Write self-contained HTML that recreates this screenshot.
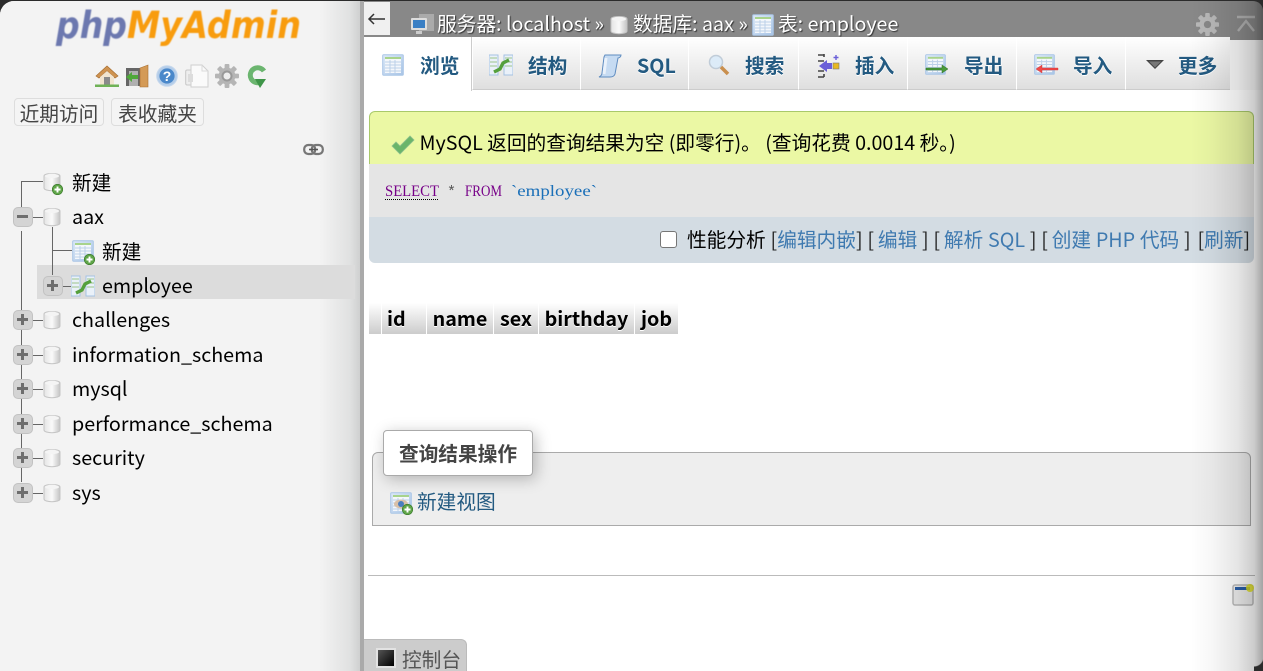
<!DOCTYPE html>
<html lang="zh"><head><meta charset="utf-8"><title>phpMyAdmin</title>
<style>
html,body{margin:0;padding:0;width:1263px;height:671px;overflow:hidden;background:#2b2b2b}
body{font-family:"Noto Sans CJK SC","Liberation Sans",sans-serif;font-size:19.7px;color:#000;position:relative}
.a{position:absolute;white-space:nowrap}
.t{position:absolute;white-space:nowrap;line-height:30px;height:30px}
svg{position:absolute;overflow:visible;filter:blur(.35px)}
#win{position:absolute;left:0;top:1px;width:1263px;height:670px;border-radius:14px 14px 10px 0;overflow:hidden;background:#fff}
.tab{position:absolute;top:37px;height:53px;width:109px;box-sizing:border-box;background:linear-gradient(#fff,#dfdfdf);border-left:1px solid #fff;border-bottom:1px solid #ccc}
.tl{position:absolute;top:50px;line-height:30px;font-weight:bold;color:#235a81;text-shadow:0 1px 0 #fff,1px 0 0 rgba(255,255,255,.6)}
.th{position:absolute;top:303px;height:31px;background:linear-gradient(#fff,#ccc);font-weight:bold;line-height:29px;text-align:center;text-shadow:0 1px 0 #fff}
.btn{position:absolute;top:98px;height:28px;width:90px;box-sizing:border-box;border:1px solid #ddd;border-radius:4px;background:#f4f4f4;color:#444;line-height:28px;text-align:center}
.lk{color:#3f7ab0}
.br{color:#222}
.x{position:absolute;width:20px;height:20px;box-sizing:border-box;border:1.5px solid #c2c2c2;border-radius:5px;background:#d4d4d4}
.x:before{content:"";position:absolute;left:3px;top:7px;width:11px;height:3px;background:#6e6e6e}
.x.p:after{content:"";position:absolute;left:7px;top:3px;width:3px;height:11px;background:#6e6e6e}
</style></head><body>
<svg width="0" height="0" style="position:absolute"><defs>
<linearGradient id="db" x1="0" x2="1"><stop offset="0" stop-color="#e4e4e4"/><stop offset=".5" stop-color="#fafafa"/><stop offset="1" stop-color="#c4c4c4"/></linearGradient>
<linearGradient id="tb" x1="0" y1="0" x2="1" y2="1"><stop offset="0" stop-color="#dce9f8"/><stop offset="1" stop-color="#a8c4e6"/></linearGradient>
<symbol id="cyl" viewBox="0 0 18 20"><path d="M1 4C1 .8 17 .8 17 4V16C17 19.6 1 19.6 1 16Z" fill="url(#db)" stroke="#c4c4c4"/><ellipse cx="9" cy="4" rx="7" ry="2.2" fill="#f4f4f4"/></symbol>
<symbol id="plus" viewBox="0 0 8 8"><circle cx="4" cy="4" r="3.8" fill="#5fa548" stroke="#3a7a2a" stroke-width=".5"/><path d="M4 1.8V6.2M1.8 4H6.2" stroke="#fff" stroke-width="1.4"/></symbol>
<symbol id="tbl" viewBox="0 0 22 22"><rect x=".7" y=".7" width="20.600" height="20.600" rx="1" fill="url(#tb)" stroke="#a9c5e6"/><rect x="3" y="3" width="16" height="16" fill="#f4f7fb"/><rect x="3" y="3" width="16" height="2" fill="#a8d38c"/><path d="M3 8H19M3 11H19M3 14H19M3 17H19M8 6V19M13 6V19" stroke="#bcd0e8" stroke-width="1" fill="none"/></symbol>
<symbol id="str" viewBox="0 0 24 22"><rect x="0" y="1" width="9" height="20" fill="#eaf1f9" stroke="#a6c2e2"/><rect x="15" y="1" width="9" height="20" fill="#eaf1f9" stroke="#a6c2e2"/><path d="M1 4H8M1 8H8M1 12H8M16 4H23M16 8H23M16 12H23" stroke="#9cc58a"/><path d="M5 18L11 15L14 9L20 6" fill="none" stroke="#55a03c" stroke-width="3.400"/></symbol>
</defs></svg>

<div id="win"></div>

<!-- sidebar -->
<div class="a" style="left:0;top:1px;width:360px;height:670px;background:linear-gradient(to right,#f3f3f3 0,#f3f3f3 320px,#e0e1e1 350px,#cfd0d0 360px);border-radius:14px 0 0 0"></div>
<div class="a" style="left:360px;top:0;width:4px;height:671px;background:#aaa"></div>
<div class="a" style="left:0;top:0;width:1263px;height:1px;background:#2b2b2b"></div>

<svg style="left:0;top:0;filter:blur(.5px)" width="360" height="60">
<text x="56" y="38" font-family="DejaVu Sans" font-weight="bold" font-style="italic" font-size="37" fill="#6c78af" textLength="71" lengthAdjust="spacingAndGlyphs">php</text>
<text x="127" y="38" font-family="DejaVu Sans" font-weight="bold" font-style="italic" font-size="37" fill="#f89c0e" textLength="174" lengthAdjust="spacingAndGlyphs">MyAdmin</text>
</svg>

<!-- nav icons -->
<svg style="left:95px;top:64px" width="24" height="24" viewBox="0 0 24 24"><path d="M1 12L12 2L23 12L20 14L12 7L4 14Z" fill="#cf9350" stroke="#a86f32" stroke-width=".7"/><path d="M5 13L12 7L19 13V21H5Z" fill="#f1e4cf"/><rect x="9" y="13" width="6" height="8" fill="#8a8a8a"/><path d="M0 20.500H24V23H0Z" fill="#6fb257"/></svg>
<svg style="left:125px;top:64px" width="24" height="24" viewBox="0 0 24 24"><rect x="1" y="4" width="14" height="18" fill="#666"/><rect x="4" y="7" width="9" height="15" fill="#b0b0b0"/><path d="M15 4L23 1V23H15Z" fill="#d49a56" stroke="#a86f32" stroke-width=".6"/><path d="M1 13L7 8V11H13V15H7V18Z" fill="#4fa83a"/></svg>
<svg style="left:156px;top:65px" width="22" height="22" viewBox="0 0 22 22"><circle cx="11" cy="11" r="10.300" fill="#b4cde9" stroke="#c5d7ec"/><circle cx="11" cy="11" r="7.600" fill="#4a88ca"/><text x="11" y="16" text-anchor="middle" font-family="Liberation Sans" font-weight="bold" font-size="14" fill="#fff">?</text></svg>
<svg style="left:185px;top:64px" width="24" height="24" viewBox="0 0 24 24"><rect x=".7" y="6" width="10" height="15" rx="1.500" fill="#eee" stroke="#c8c8c8"/><path d="M6 1H17L23 7V23H6Z" fill="#fafafa" stroke="#cfcfcf"/><rect x="3" y="10" width="5" height="8" fill="#dcdcdc"/><path d="M17 1V7H23" fill="none" stroke="#dadada"/></svg>
<svg style="left:215px;top:64px" width="24" height="24" viewBox="0 0 24 24"><g fill="#b5b5b5"><circle cx="12" cy="12" r="8.400"/><rect x="9.600" y="0" width="4.800" height="24" rx="1"/><rect x="9.600" y="0" width="4.800" height="24" rx="1" transform="rotate(45 12 12)"/><rect x="9.600" y="0" width="4.800" height="24" rx="1" transform="rotate(90 12 12)"/><rect x="9.600" y="0" width="4.800" height="24" rx="1" transform="rotate(135 12 12)"/></g><circle cx="12" cy="12" r="5.500" fill="#999"/><circle cx="12" cy="12" r="3.500" fill="#eee"/></svg>
<svg style="left:247px;top:65px" width="20" height="24" viewBox="0 0 20 24"><path d="M17 6A7.500 7.500 0 1 0 14 17" fill="none" stroke="#6bb56f" stroke-width="5"/><path d="M8 14H19L13 23Z" fill="#3f9548"/></svg>

<div class="btn" style="left:14px">近期访问</div>
<div class="btn" style="left:111px;width:93px">表收藏夹</div>

<svg style="left:303px;top:143px" width="21" height="13" viewBox="0 0 21 13"><rect x="1.200" y="2" width="11" height="9" rx="4" fill="none" stroke="#777" stroke-width="2.200"/><rect x="8.800" y="2" width="11" height="9" rx="4" fill="none" stroke="#777" stroke-width="2.200"/><path d="M6 6.500H15" stroke="#555" stroke-width="1.600"/></svg>

<!-- tree -->
<div class="a" style="left:37px;top:265px;width:318px;height:34px;background:#dcdcdc"></div>
<svg style="left:0;top:0;filter:none" width="360" height="520" viewBox="0 0 360 520" fill="none" stroke="#666" stroke-width="1">
<path d="M21.500 181.500H43M21.500 181V207M21.500 231V482"/>
<path d="M33 217.500H43M33 320.500H43M33 355.500H43M33 389.500H43M33 424.500H43M33 458.500H43M33 493.500H43"/>
<path d="M52.500 227V275M52.500 250.500H72M63 286.500H72"/>
</svg>
<div class="x" style="left:13px;top:207px"></div>
<div class="x p" style="left:13px;top:310px"></div>
<div class="x p" style="left:13px;top:345px"></div>
<div class="x p" style="left:13px;top:379px"></div>
<div class="x p" style="left:13px;top:414px"></div>
<div class="x p" style="left:13px;top:448px"></div>
<div class="x p" style="left:13px;top:483px"></div>
<div class="x p" style="left:43px;top:276px"></div>
<svg style="left:43px;top:172px" width="18" height="20"><use href="#cyl"/></svg>
<svg style="left:52px;top:184px" width="11" height="11"><use href="#plus"/></svg>
<svg style="left:43px;top:207px" width="18" height="20"><use href="#cyl"/></svg>
<svg style="left:43px;top:310px" width="18" height="20"><use href="#cyl"/></svg>
<svg style="left:43px;top:345px" width="18" height="20"><use href="#cyl"/></svg>
<svg style="left:43px;top:379px" width="18" height="20"><use href="#cyl"/></svg>
<svg style="left:43px;top:414px" width="18" height="20"><use href="#cyl"/></svg>
<svg style="left:43px;top:448px" width="18" height="20"><use href="#cyl"/></svg>
<svg style="left:43px;top:483px" width="18" height="20"><use href="#cyl"/></svg>
<svg style="left:72px;top:240px" width="22" height="22"><use href="#tbl"/></svg>
<svg style="left:84px;top:254px" width="11" height="11"><use href="#plus"/></svg>
<svg style="left:71px;top:275px" width="24" height="22"><use href="#str"/></svg>
<div class="t" style="left:72px;top:167px">新建</div>
<div class="t" style="left:72px;top:201px">aax</div>
<div class="t" style="left:102px;top:236px">新建</div>
<div class="t" style="left:102px;top:270px">employee</div>
<div class="t" style="left:72px;top:304px">challenges</div>
<div class="t" style="left:72px;top:339px">information_schema</div>
<div class="t" style="left:72px;top:373px">mysql</div>
<div class="t" style="left:72px;top:408px">performance_schema</div>
<div class="t" style="left:72px;top:442px">security</div>
<div class="t" style="left:72px;top:477px">sys</div>

<!-- top bar -->
<div class="a" style="left:364px;top:1px;width:899px;height:39px;background:#888;border-radius:0 10px 0 0"></div>
<div class="a" style="left:364px;top:2px;width:26px;height:33px;background:#f0f0f0"></div>
<svg style="left:367px;top:12px;filter:none" width="20" height="14" viewBox="0 0 20 14"><path d="M18 7H2M7 2L2 7L7 12" fill="none" stroke="#333" stroke-width="1.500"/></svg>
<svg style="left:411px;top:13px" width="23" height="23" viewBox="0 0 23 23"><rect x="8" y="1" width="15" height="17" fill="#aaa"/><rect x="0" y="5" width="16" height="12" rx="1" fill="#ddd"/><rect x="2" y="7" width="12" height="8" fill="#3a7fc4"/><rect x="5" y="18" width="6" height="3" fill="#ccc"/></svg>
<svg style="left:610px;top:15px" width="18" height="20"><use href="#cyl"/></svg>
<svg style="left:752px;top:14px" width="22" height="22"><use href="#tbl"/></svg>
<div class="t" style="left:437px;top:8px;color:#fff;text-shadow:1px 1px 1px #333">服务器: localhost »</div>
<div class="t" style="left:633px;top:8px;color:#fff;text-shadow:1px 1px 1px #333">数据库: aax »</div>
<div class="t" style="left:778px;top:8px;color:#fff;text-shadow:1px 1px 1px #333">表: employee</div>

<!-- tabs -->
<div class="a" style="left:364px;top:37px;width:811px;height:2px;background:#fff"></div>
<div class="a" style="left:364px;top:37px;width:107px;height:54px;background:#fff"></div>
<div class="a" style="left:471px;top:37px;height:54px;width:1px;background:#ccc"></div>
<div class="tab" style="left:472px;width:108px"></div>
<div class="tab" style="left:580px;width:108px"></div>
<div class="tab" style="left:688px;width:110px"></div>
<div class="tab" style="left:798px"></div>
<div class="tab" style="left:907px"></div>
<div class="tab" style="left:1016px"></div>
<div class="tab" style="left:1125px;width:105px"></div>
<div class="a" style="left:1230px;top:40px;width:33px;height:50px;background:#f8f8f8"></div>

<svg style="left:382px;top:54px" width="22" height="22"><use href="#tbl"/></svg>
<svg style="left:489px;top:54px" width="24" height="22"><use href="#str"/></svg>
<svg style="left:598px;top:53px" width="24" height="25" viewBox="0 0 24 25"><path d="M7 2H23C23 4 21 5 20 5L17 21C16 24 13 24 12 24H1C3 23 4 22 4 20L6 4Z" fill="#c6dbf2" stroke="#5f8cc0"/><path d="M8 5L6 21" stroke="#eaf2fb" stroke-width="3"/></svg>
<svg style="left:708px;top:54px" width="22" height="22" viewBox="0 0 22 22"><circle cx="8" cy="8" r="6.500" fill="#dcebf8" stroke="#c0ccd8" stroke-width="1.500"/><path d="M13 13L20 20" stroke="#c98f4e" stroke-width="3.500"/></svg>
<svg style="left:817px;top:53px" width="23" height="25" viewBox="0 0 23 25"><path d="M1 2H7M1 8H7M1 18H7M1 24H7M7 1V4M7 21V24" stroke="#444" stroke-width="1.600" fill="none"/><path d="M2 13L10 7V10H15V16H10V19Z" fill="#6a5fd8"/><rect x="16" y="10" width="6" height="6" fill="#e8b820" stroke="#777" stroke-width=".6"/><path d="M19 2V7M16.500 4.500H21.500" stroke="#6a5fd8" stroke-width="1.400"/></svg>
<svg style="left:925px;top:54px" width="24" height="22" viewBox="0 0 24 22"><use href="#tbl" width="21" height="21"/><path d="M1 14H17V11L23 15L17 19V16H1Z" fill="#4a9a3a" stroke="#2f6f25" stroke-width=".5"/></svg>
<svg style="left:1034px;top:54px" width="24" height="22" viewBox="0 0 24 22"><use href="#tbl" width="21" height="21"/><path d="M24 14H8V11L2 15L8 19V16H24Z" fill="#ee4a4a" stroke="#d03030" stroke-width=".4"/></svg>
<svg style="left:1146px;top:59px" width="18" height="11" viewBox="0 0 18 11"><path d="M0 1H18L9 10Z" fill="#444"/><path d="M3 2.500H15L9 8.500Z" fill="#777"/></svg>

<div class="tl" style="left:420px">浏览</div>
<div class="tl" style="left:528px">结构</div>
<div class="tl" style="left:637px">SQL</div>
<div class="tl" style="left:745px">搜索</div>
<div class="tl" style="left:855px">插入</div>
<div class="tl" style="left:964px">导出</div>
<div class="tl" style="left:1073px">导入</div>
<div class="tl" style="left:1178px">更多</div>

<svg style="left:1196px;top:13px" width="23" height="23" viewBox="0 0 24 24"><g fill="#b8b8b8"><circle cx="12" cy="12" r="8.400"/><rect x="9.600" y="0" width="4.800" height="24" rx="1"/><rect x="9.600" y="0" width="4.800" height="24" rx="1" transform="rotate(45 12 12)"/><rect x="9.600" y="0" width="4.800" height="24" rx="1" transform="rotate(90 12 12)"/><rect x="9.600" y="0" width="4.800" height="24" rx="1" transform="rotate(135 12 12)"/></g><circle cx="12" cy="12" r="3.800" fill="#888"/></svg>
<svg style="left:1237px;top:16px" width="18" height="16" viewBox="0 0 18 16"><path d="M0 1H18M1 15L9 5L17 15" fill="none" stroke="#b0b0b0" stroke-width="2.400"/></svg>

<!-- message -->
<div class="a" style="left:369px;top:111px;width:885px;height:53px;box-sizing:border-box;background:#ebf8a4;border:1px solid #a9c96a;border-bottom:0;border-radius:6px 6px 0 0"></div>
<svg style="left:391px;top:135px" width="24" height="20" viewBox="0 0 24 20"><path d="M1 11L5 7L9 11L19 1L23 5L9 19Z" fill="#6ab56a" stroke="#8cc08c" stroke-width=".8"/></svg>
<div class="t" style="left:419.5px;top:127px">MySQL 返回的查询结果为空 (即零行)。 (查询花费 0.0014 秒。)</div>

<div class="a" style="left:369px;top:164px;width:885px;height:53px;background:#e5e5e5"></div>
<svg style="left:0;top:0;filter:none" width="700" height="210" font-family="Liberation Serif" font-size="16">
<text x="385" y="196" fill="#770088" textLength="54" lengthAdjust="spacingAndGlyphs">SELECT</text>
<path d="M385 199.500H439" stroke="#000" stroke-dasharray="1 1"/>
<text x="447" y="196" fill="#555" font-family="Liberation Mono" font-size="15">*</text>
<text x="465" y="196" fill="#770088" textLength="37" lengthAdjust="spacingAndGlyphs">FROM</text>
<text x="511" y="196" fill="#1a6fb8" textLength="86" lengthAdjust="spacingAndGlyphs">`employee`</text>
</svg>

<div class="a" style="left:369px;top:217px;width:885px;height:46px;background:#d3dce3;border-radius:0 0 6px 6px"></div>
<div class="a" style="left:660px;top:231px;width:17px;height:17px;box-sizing:border-box;border:1.500px solid #767676;border-radius:3px;background:#fff"></div>
<div class="t" style="left:687px;top:224px;word-spacing:.36px">性能分析 <span class="br">[</span><span class="lk">编辑内嵌</span><span class="br">]</span> <span class="br">[</span> <span class="lk" style="margin-left:-1px">编辑</span> <span class="br">]</span> <span class="br">[</span> <span class="lk" style="margin-left:-1px">解析 SQL</span> <span class="br">]</span> <span class="br">[</span> <span class="lk" style="margin-left:-1px">创建 PHP 代码</span> <span class="br">]</span> <span class="br" style="margin-left:2px">[</span><span class="lk">刷新</span><span class="br">]</span></div>

<!-- table header -->
<div class="th" style="left:369px;width:12px"></div>
<div class="th" style="left:382px;width:44px;text-align:left"><span style="position:absolute;left:5px">id</span></div>
<div class="th" style="left:427px;width:66px">name</div>
<div class="th" style="left:494px;width:44px">sex</div>
<div class="th" style="left:539px;width:95px">birthday</div>
<div class="th" style="left:635px;width:43px">job</div>

<!-- fieldset -->
<div class="a" style="left:372px;top:452px;width:879px;height:74px;box-sizing:border-box;background:#eee;border:1px solid #aaa;border-radius:6px 6px 0 0"></div>
<div class="a" style="left:383px;top:430px;width:150px;height:46px;box-sizing:border-box;background:#fff;border:1px solid #aaa;border-radius:4px;box-shadow:3px 3px 15px rgba(0,0,0,.25);font-weight:bold;color:#444;line-height:44px;text-align:center">查询结果操作</div>
<svg style="left:390px;top:492px" width="22" height="22"><use href="#tbl"/><ellipse cx="11" cy="12" rx="7" ry="4.500" fill="#d8c0a8"/><circle cx="11" cy="12" r="3" fill="#4a7ec0"/></svg>
<svg style="left:402px;top:504px" width="11" height="11"><use href="#plus"/></svg>
<div class="t" style="left:417px;top:486px;color:#235a81">新建视图</div>

<div class="a" style="left:368px;top:575px;width:887px;height:1px;background:#bbb"></div>
<svg style="left:1232px;top:583px" width="23" height="23" viewBox="0 0 23 23"><rect x="1" y="2" width="20" height="20" rx="2" fill="#eee" stroke="#bbb" stroke-width="1.500"/><rect x="3" y="4" width="15" height="3" fill="#2a5fa8"/><circle cx="18" cy="5" r="4" fill="#dede20" opacity=".85"/></svg>

<!-- console -->
<div class="a" style="left:364px;top:639px;width:103px;height:32px;box-sizing:border-box;background:#ccc;border:1px solid #bbb;border-bottom:0;border-left:0;border-radius:0 6px 0 0"></div>
<div class="a" style="left:376px;top:648px;width:20px;height:20px;box-sizing:border-box;border:2px solid #e2e2e2;background:linear-gradient(135deg,#555,#000)"></div>
<div class="t" style="left:402px;top:644px;color:#555">控制台</div>

<!-- right shadow -->
<div class="a" style="left:1190px;top:1px;width:73px;height:670px;background:linear-gradient(to right,rgba(0,0,0,0) 0,rgba(0,0,0,.03) 30%,rgba(0,0,0,.1) 65%,rgba(0,0,0,.2) 88%,rgba(0,0,0,.36) 100%);border-radius:0 10px 10px 0"></div>
<div class="a" style="left:1254px;top:657px;width:9px;height:14px;background:radial-gradient(circle at 0 0,transparent 9px,#2b2b2b 10px)"></div>
</body></html>
